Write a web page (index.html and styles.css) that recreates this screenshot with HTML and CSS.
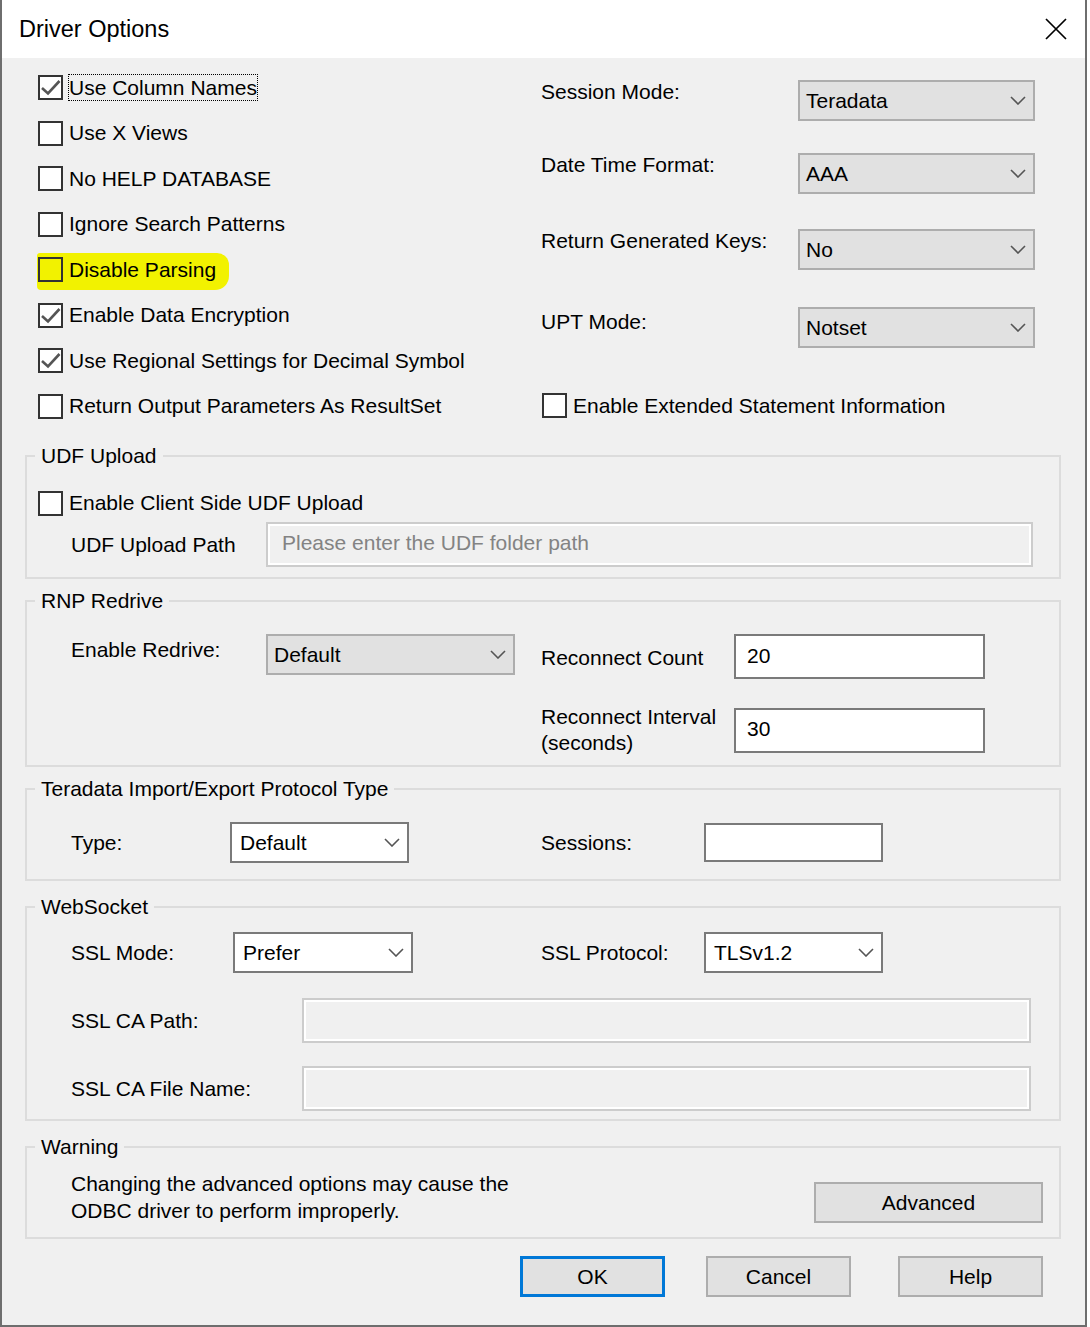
FILE: index.html
```html
<!DOCTYPE html>
<html>
<head>
<meta charset="utf-8">
<title>Driver Options</title>
<link rel="stylesheet" href="styles.css">
</head>
<body>
<div class="window">
  <div class="titlebar">
    <span class="title">Driver Options</span>
    <svg class="close" width="22" height="22" viewBox="0 0 22 22"><path d="M1 1 L21 21 M21 1 L1 21" stroke="#000" stroke-width="1.7" fill="none"/></svg>
  </div>
  <div class="client">
    <div class="top">
      <div class="checks">
        <div class="check-row"><span class="cb"><svg viewBox="0 0 21 21" width="21" height="21"><polyline points="2,11 8,16.5 19.5,4" fill="none" stroke="#555" stroke-width="2.6"/></svg></span><span class="lbl focus">Use Column Names</span></div>
        <div class="check-row"><span class="cb"></span><span class="lbl">Use X Views</span></div>
        <div class="check-row"><span class="cb"></span><span class="lbl">No HELP DATABASE</span></div>
        <div class="check-row"><span class="cb"></span><span class="lbl">Ignore Search Patterns</span></div>
        <div class="check-row"><span class="hl"><span class="cb clear"></span><span class="lbl">Disable Parsing</span></span></div>
        <div class="check-row"><span class="cb"><svg viewBox="0 0 21 21" width="21" height="21"><polyline points="2,11 8,16.5 19.5,4" fill="none" stroke="#555" stroke-width="2.6"/></svg></span><span class="lbl">Enable Data Encryption</span></div>
        <div class="check-row"><span class="cb"><svg viewBox="0 0 21 21" width="21" height="21"><polyline points="2,11 8,16.5 19.5,4" fill="none" stroke="#555" stroke-width="2.6"/></svg></span><span class="lbl">Use Regional Settings for Decimal Symbol</span></div>
        <div class="check-row"><span class="cb"></span><span class="lbl">Return Output Parameters As ResultSet</span></div>
      </div>
      <div class="settings">
        <div class="set-row r1"><span class="set-label">Session Mode:</span><div class="combo gray w237"><span class="val">Teradata</span><svg class="chev" width="16" height="9" viewBox="0 0 16 9"><polyline points="1,1 8,8 15,1" fill="none" stroke="#555" stroke-width="1.6"/></svg></div></div>
        <div class="set-row r2"><span class="set-label">Date Time Format:</span><div class="combo gray w237"><span class="val">AAA</span><svg class="chev" width="16" height="9" viewBox="0 0 16 9"><polyline points="1,1 8,8 15,1" fill="none" stroke="#555" stroke-width="1.6"/></svg></div></div>
        <div class="set-row r3"><span class="set-label">Return Generated Keys:</span><div class="combo gray w237"><span class="val">No</span><svg class="chev" width="16" height="9" viewBox="0 0 16 9"><polyline points="1,1 8,8 15,1" fill="none" stroke="#555" stroke-width="1.6"/></svg></div></div>
        <div class="set-row r4"><span class="set-label lower">UPT Mode:</span><div class="combo gray w237"><span class="val">Notset</span><svg class="chev" width="16" height="9" viewBox="0 0 16 9"><polyline points="1,1 8,8 15,1" fill="none" stroke="#555" stroke-width="1.6"/></svg></div></div>
        <div class="check-row ext"><span class="cb"></span><span class="lbl">Enable Extended Statement Information</span></div>
      </div>
    </div>

    <fieldset class="group udf">
      <legend>UDF Upload</legend>
      <div class="check-row short"><span class="cb"></span><span class="lbl">Enable Client Side UDF Upload</span></div>
      <div class="row path-row">
        <span class="rlabel w195">UDF Upload Path</span>
        <div class="edit disabled w767 h45"><span class="placeholder">Please enter the UDF folder path</span></div>
      </div>
    </fieldset>

    <fieldset class="group rnp">
      <legend>RNP Redrive</legend>
      <div class="row rnp-row1">
        <span class="rlabel w195 pad4">Enable Redrive:</span>
        <div class="combo gray w249"><span class="val">Default</span><svg class="chev" width="16" height="9" viewBox="0 0 16 9"><polyline points="1,1 8,8 15,1" fill="none" stroke="#555" stroke-width="1.6"/></svg></div>
        <span class="rlabel w193 mid ml26">Reconnect Count</span>
        <div class="edit w251 h45"><span class="val">20</span></div>
      </div>
      <div class="row rnp-row2">
        <span class="rlabel w193 two">Reconnect Interval<br>(seconds)</span>
        <div class="edit w251 h45"><span class="val">30</span></div>
      </div>
    </fieldset>

    <fieldset class="group proto">
      <legend>Teradata Import/Export Protocol Type</legend>
      <div class="row line41">
        <span class="rlabel w159">Type:</span>
        <div class="combo white w179"><span class="val">Default</span><svg class="chev" width="16" height="9" viewBox="0 0 16 9"><polyline points="1,1 8,8 15,1" fill="none" stroke="#555" stroke-width="1.6"/></svg></div>
        <span class="rlabel w163 ml132">Sessions:</span>
        <div class="edit w179 h39"></div>
      </div>
    </fieldset>

    <fieldset class="group ws">
      <legend>WebSocket</legend>
      <div class="row line41">
        <span class="rlabel w162">SSL Mode:</span>
        <div class="combo white w180"><span class="val">Prefer</span><svg class="chev" width="16" height="9" viewBox="0 0 16 9"><polyline points="1,1 8,8 15,1" fill="none" stroke="#555" stroke-width="1.6"/></svg></div>
        <span class="rlabel w163 ml128">SSL Protocol:</span>
        <div class="combo white w179"><span class="val">TLSv1.2</span><svg class="chev" width="16" height="9" viewBox="0 0 16 9"><polyline points="1,1 8,8 15,1" fill="none" stroke="#555" stroke-width="1.6"/></svg></div>
      </div>
      <div class="row ca-row1">
        <span class="rlabel w231">SSL CA Path:</span>
        <div class="edit disabled w729 h45"></div>
      </div>
      <div class="row ca-row2">
        <span class="rlabel w231">SSL CA File Name:</span>
        <div class="edit disabled w729 h45"></div>
      </div>
    </fieldset>

    <fieldset class="group warn">
      <legend>Warning</legend>
      <div class="warn-row">
        <p class="warn-text">Changing the advanced options may cause the<br>ODBC driver to perform improperly.</p>
        <button class="btn adv">Advanced</button>
      </div>
    </fieldset>

    <div class="buttons">
      <button class="btn default">OK</button>
      <button class="btn cancel">Cancel</button>
      <button class="btn help">Help</button>
    </div>
  </div>
</div>
</body>
</html>
```

FILE: styles.css
```css
html, body {
  margin: 0;
  padding: 0;
  background: #ffffff;
}

.window {
  width: 1087px;
  height: 1327px;
  box-sizing: border-box;
  border-left: 2px solid #6e6e6e;
  border-right: 2px solid #6e6e6e;
  border-bottom: 2px solid #6e6e6e;
  background: #f0f0f0;
  font-family: "Liberation Sans", Arial, sans-serif;
  font-size: 21px;
  color: #000;
}

.titlebar {
  height: 58px;
  background: #ffffff;
  display: flex;
  align-items: center;
  justify-content: space-between;
  padding: 0 18px 0 17px;
  box-sizing: border-box;
}

.title {
  font-size: 23.5px;
  line-height: 28px;
}

.close {
  display: block;
  margin-top: -1px;
}

.client {
  padding: 0 24px 0 23px;
}

/* top section */
.top {
  display: grid;
  grid-template-columns: 503px 1fr;
  padding-left: 13px;
  height: 386px;
}

.checks {
  padding-top: 7px;
}

.check-row {
  display: flex;
  align-items: center;
  height: 45.5px;
}

.check-row.short {
  height: 30px;
}

.cb {
  width: 25px;
  height: 25px;
  box-sizing: border-box;
  border: 2px solid #333;
  background: #fff;
  margin-right: 6px;
  flex: none;
  display: flex;
  align-items: center;
  justify-content: center;
}

.cb svg {
  display: block;
}

.cb.clear {
  background: transparent;
}

.lbl {
  line-height: 24px;
  white-space: nowrap;
}

.lbl.focus {
  border: 1px dotted #000;
  margin-left: -1px;
  line-height: 25px;
}

.hl {
  display: flex;
  align-items: center;
  margin-left: -1px;
  margin-top: 4px;
  padding: 4px 13px 8px 1px;
  background: #f2f200;
  border-radius: 3px 12px 14px 4px;
}

.settings {
  display: flex;
  flex-direction: column;
}

.set-row {
  display: flex;
  align-items: flex-start;
  height: 41px;
}

.set-row.r1 { margin-top: 22px; }
.set-row.r2 { margin-top: 32px; }
.set-row.r3 { margin-top: 35px; }
.set-row.r4 { margin-top: 37px; }

.set-label {
  width: 257px;
  line-height: 24px;
  white-space: nowrap;
}

.set-label.lower {
  padding-top: 3px;
}

.check-row.ext {
  margin-top: 35px;
  margin-left: 1px;
}

/* combos & edits */
.combo {
  height: 41px;
  box-sizing: border-box;
  display: flex;
  align-items: center;
  flex: none;
}

.combo .val {
  flex: 1;
  white-space: nowrap;
  line-height: 24px;
}

.combo .chev {
  display: block;
  margin-right: 7px;
  flex: none;
}

.combo.gray {
  background: #e1e1e1;
  border: 2px solid #adadad;
  padding-left: 6px;
}

.combo.white {
  background: #ffffff;
  border: 2px solid #7a7a7a;
  padding-left: 8px;
}

.edit {
  box-sizing: border-box;
  background: #ffffff;
  border: 2px solid #7a7a7a;
  padding-left: 11px;
  display: flex;
  align-items: center;
  flex: none;
}

.edit .val {
  line-height: 24px;
  margin-top: -2px;
}

.edit.disabled {
  background: #f0f0f0;
  border: 2px solid #cccccc;
  box-shadow: inset 0 0 0 2px #ffffff;
  padding-left: 14px;
}

.placeholder {
  color: #838383;
  line-height: 24px;
  white-space: nowrap;
  margin-top: -4px;
}

.w179 { width: 179px; }
.w180 { width: 180px; }
.w237 { width: 237px; }
.w249 { width: 249px; }
.w251 { width: 251px; }
.w729 { width: 729px; }
.w767 { width: 767px; }
.h39 { height: 39px; }
.h45 { height: 45px; }

/* group boxes */
.group {
  margin: 0;
  border: 2px solid #dcdcdc;
  padding: 0 0 0 11px;
  box-sizing: border-box;
  min-width: 0;
}

.group legend {
  margin-left: -3px;
  padding: 0 6px;
  line-height: 24px;
  white-space: nowrap;
}

.row {
  display: flex;
  align-items: center;
}

.rlabel {
  line-height: 24px;
  white-space: nowrap;
  flex: none;
}

.rlabel.w195, .rlabel.w159, .rlabel.w162, .rlabel.w231 {
  margin-left: 33px;
}

.w195 { width: 195px; }
.w193 { width: 193px; }
.w159 { width: 159px; }
.w162 { width: 162px; }
.w163 { width: 163px; }
.w231 { width: 231px; }
.ml26 { margin-left: 26px; }
.ml128 { margin-left: 128px; }
.ml132 { margin-left: 132px; }

.udf {
  height: 135px;
  padding-top: 20px;
}

.path-row {
  margin-top: 4px;
}

.rnp {
  margin-top: 10px;
  height: 178px;
  padding-top: 21px;
}

.rnp-row1 {
  align-items: flex-start;
  height: 45px;
}

.rlabel.pad4 {
  padding-top: 4px;
}

.rlabel.mid {
  align-self: center;
  margin-top: 2px;
}

.rnp-row2 {
  margin-top: 25px;
  padding-left: 503px;
}

.rlabel.two {
  line-height: 26px;
}

.proto {
  margin-top: 10px;
  height: 104px;
  padding-top: 21px;
}

.line41 {
  height: 41px;
}

.ws {
  margin-top: 14px;
  height: 226px;
  padding-top: 13px;
}

.ca-row1 {
  margin-top: 25px;
  height: 45px;
}

.ca-row2 {
  margin-top: 23px;
  height: 45px;
}

.warn {
  margin-top: 14px;
  height: 104px;
  padding-top: 11px;
}

.warn-row {
  display: flex;
  align-items: flex-start;
}

.warn-text {
  margin: 0 0 0 33px;
  line-height: 27px;
}

/* buttons */
.btn {
  font-family: "Liberation Sans", Arial, sans-serif;
  font-size: 21px;
  color: #000;
  background: #e1e1e1;
  border: 2px solid #adadad;
  box-sizing: border-box;
  height: 41px;
  padding: 0;
  margin: 0;
}

.btn.adv {
  width: 229px;
  margin-left: auto;
  margin-right: 16px;
  margin-top: 12px;
}

.buttons {
  display: flex;
  justify-content: flex-end;
  margin-top: 17px;
  padding-right: 18px;
}

.btn.default {
  width: 145px;
  border: 3px solid #0078d7;
}

.btn.cancel {
  width: 145px;
  margin-left: 41px;
}

.btn.help {
  width: 145px;
  margin-left: 47px;
}
```
